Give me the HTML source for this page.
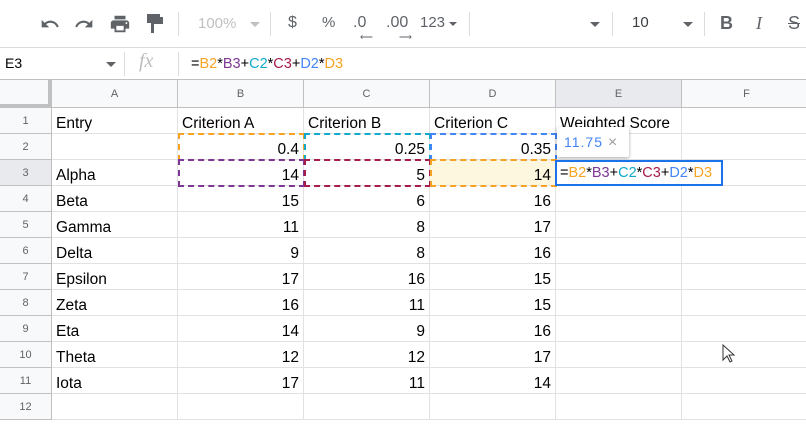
<!DOCTYPE html>
<html><head><style>
*{box-sizing:border-box;margin:0;padding:0}
body{width:806px;height:424px;overflow:hidden;background:#fff;font-family:"Liberation Sans",Arial,sans-serif;position:relative}
.a{position:absolute}
.tb{left:0;top:0;width:806px;height:48px;border-bottom:1px solid #dadce0}
.ic{position:absolute;top:14px;color:#5f6368;font-size:16px}
.sep{position:absolute;top:12px;width:1px;height:24px;background:#dadce0}
.fb{left:0;top:48px;width:806px;height:32px;border-bottom:1px solid #c0c0c0}
.cell{position:absolute;height:26px;border-right:1px solid #e2e2e2;border-bottom:1px solid #e2e2e2;font-size:15.5px;line-height:26px;padding:3px 4px 0;color:#000;white-space:nowrap}
.r{text-align:right}
.rh{position:absolute;left:0;width:52px;height:26px;background:#f8f9fa;border-right:1px solid #c0c0c0;border-bottom:1px solid #c0c0c0;font-size:11px;color:#5f6368;text-align:center;line-height:26px}
.ch{position:absolute;top:80px;height:28px;background:#f8f9fa;border-right:1px solid #c0c0c0;border-bottom:1px solid #c0c0c0;font-size:11px;color:#5f6368;text-align:center;line-height:28px}
.d{position:absolute;border:2px dashed}
</style></head><body>
<div class="a tb">
<svg class="a" style="left:40px;top:14px" width="20" height="20" viewBox="0 0 24 24"><path fill="#5f6368" d="M12.5 8c-2.65 0-5.050.99-6.9 2.6L2 7v9h9l-3.62-3.620c1.39-1.16 3.160-1.88 5.12-1.88 3.54 0 6.55 2.31 7.6 5.5l2.37-.78C21.08 11.03 17.15 8 12.5 8z"/></svg>
<svg class="a" style="left:74px;top:14px" width="20" height="20" viewBox="0 0 24 24"><path fill="#5f6368" d="M18.4 10.6C16.55 8.99 14.15 8 11.5 8c-4.65 0-8.58 3.03-9.96 7.22L3.9 16c1.05-3.19 4.05-5.5 7.6-5.5 1.95 0 3.73.72 5.12 1.88L13 16h9V7l-3.6 3.6z"/></svg>
<svg class="a" style="left:109px;top:13px" width="22" height="22" viewBox="0 0 24 24"><path fill="#5f6368" d="M19 8H5c-1.66 0-3 1.34-3 3v6h4v4h12v-4h4v-6c0-1.66-1.34-3-3-3zm-3 11H8v-5h8v5zm3-7c-.55 0-1-.45-1-1s.45-1 1-1 1 .45 1 1-.45 1-1 1zm-1-9H6v4h12V3z"/></svg>
<svg class="a" style="left:145px;top:12px" width="20" height="24" viewBox="0 0 20 24"><path fill="#5f6368" d="M2 2h13v3h3v7H9v9H6v-11h9V8H15v3H2z"/></svg>
<div class="sep" style="left:178px"></div>
<div class="a" style="left:198px;top:15px;font-size:15px;color:#c0c0c0">100%</div>
<div class="a" style="left:250px;top:22px;border:5px solid transparent;border-top-color:#c0c0c0"></div>
<div class="sep" style="left:270px"></div>
<div class="ic" style="left:288px;font-size:16px">$</div>
<div class="ic" style="left:322px;font-size:15px">%</div>
<div class="ic" style="left:353px;font-size:16px">.0</div>
<div class="a" style="left:360px;top:32px;font-size:9px;color:#5f6368">⟵</div>
<div class="ic" style="left:386px;font-size:16px">.00</div>
<div class="a" style="left:399px;top:32px;font-size:9px;color:#5f6368">⟶</div>
<div class="ic" style="left:420px;font-size:15px">123</div>
<div class="a" style="left:449px;top:22px;border:4px solid transparent;border-top-color:#5f6368"></div>
<div class="sep" style="left:469px"></div>
<div class="a" style="left:590px;top:22px;border:5px solid transparent;border-top-color:#5f6368"></div>
<div class="sep" style="left:612px"></div>
<div class="a" style="left:632px;top:14px;font-size:15px;color:#3c4043">10</div>
<div class="a" style="left:683px;top:22px;border:5px solid transparent;border-top-color:#5f6368"></div>
<div class="sep" style="left:704px"></div>
<div class="ic" style="left:720px;font-size:18px;font-weight:bold;top:13px">B</div>
<div class="ic" style="left:756px;font-size:18px;font-style:italic;top:13px;font-family:'Liberation Serif'">I</div>
<div class="ic" style="left:788px;font-size:18px;text-decoration:line-through;top:13px">S</div>
</div>
<div class="a fb">
<div class="a" style="left:5px;top:7px;font-size:14px">E3</div>
<div class="a" style="left:106px;top:14px;border:5px solid transparent;border-top-color:#5f6368"></div>
<div class="a" style="left:124px;top:4px;width:1px;height:24px;background:#dadce0"></div>
<div class="a" style="left:139px;top:2px;font-size:20px;font-style:italic;color:#bdbdbd;font-family:'Liberation Serif'">fx</div>
<div class="a" style="left:178px;top:4px;width:1px;height:24px;background:#dadce0"></div>
<div class="a" style="left:191px;top:8px;font-size:14.5px"><span>=</span><span style="color:#f6a323">B2</span>*<span style="color:#7e3794">B3</span>+<span style="color:#11a9cc">C2</span>*<span style="color:#a61d4c">C3</span>+<span style="color:#4285f4">D2</span>*<span style="color:#f6a323">D3</span></div>
</div>
<div class="a" style="left:0;top:80px;width:52px;height:28px;background:#f8f9fa;border-right:4px solid #c0c0c0;border-bottom:4px solid #c0c0c0"></div>
<div class="ch" style="left:52px;width:126px">A</div>
<div class="ch" style="left:178px;width:126px">B</div>
<div class="ch" style="left:304px;width:126px">C</div>
<div class="ch" style="left:430px;width:126px">D</div>
<div class="ch" style="left:556px;width:126px;background:#e8eaed">E</div>
<div class="ch" style="left:682px;width:130px">F</div>
<div id="g"></div>
<script>
var rows=[["Entry","Criterion A","Criterion B","Criterion C","Weighted Score"],["","0.4","0.25","0.35",""],["Alpha","14","5","14",""],["Beta","15","6","16"],["Gamma","11","8","17"],["Delta","9","8","16"],["Epsilon","17","16","15"],["Zeta","16","11","15"],["Eta","14","9","16"],["Theta","12","12","17"],["Iota","17","11","14"],["","","","",""]];
var h="";var xs=[52,178,304,430,556,682];
for(var i=0;i<12;i++){var y=108+26*i;
h+='<div class="rh" style="top:'+y+'px;'+(i==2?'background:#e8eaed':'')+'">'+(i+1)+'</div>';
for(var j=0;j<6;j++){var t=rows[i][j]||"";var r=(i>0&&j>0&&j<4)?' r':'';
var bg=(i==2&&j==3)?'background:#fef7e0;':'';
h+='<div class="cell'+r+'" style="'+bg+'left:'+xs[j]+'px;top:'+y+'px;width:'+(j==5?130:126)+'px">'+t+'</div>';}}
document.getElementById('g').innerHTML=h;
</script>
<div class="d" style="left:178px;top:133px;width:127px;height:28px;border-color:#f6a323"></div>
<div class="d" style="left:304px;top:133px;width:127px;height:28px;border-color:#11a9cc"></div>
<div class="d" style="left:430px;top:133px;width:127px;height:28px;border-color:#4285f4"></div>
<div class="d" style="left:178px;top:159px;width:127px;height:28px;border-color:#7e3794"></div>
<div class="d" style="left:304px;top:159px;width:127px;height:28px;border-color:#a61d4c"></div>
<div class="d" style="left:430px;top:159px;width:127px;height:28px;border-color:#f6a323"></div>
<div class="a" style="left:557px;top:127px;width:72px;height:30px;background:#fff;box-shadow:0 1px 3px rgba(0,0,0,.35);border-radius:2px;font-size:14px;line-height:30px;padding-left:7px;color:#4285f4;letter-spacing:1px">11.75 <span style="color:#9e9e9e;font-size:16px">×</span></div>
<div class="a" style="left:555px;top:160px;width:168px;height:26px;border:2px solid #1a73e8;background:#fff;font-size:14.5px;line-height:22px;padding-left:3px;z-index:2"><span>=</span><span style="color:#f6a323">B2</span>*<span style="color:#7e3794">B3</span>+<span style="color:#11a9cc">C2</span>*<span style="color:#a61d4c">C3</span>+<span style="color:#4285f4">D2</span>*<span style="color:#f6a323">D3</span></div>
<svg class="a" style="left:722px;top:344px" width="14" height="20" viewBox="0 0 14 20"><path d="M1 1v15l4-4 3 6 2-1-3-6h5z" fill="#fff" stroke="#333" stroke-width="1"/></svg>
</body></html>
